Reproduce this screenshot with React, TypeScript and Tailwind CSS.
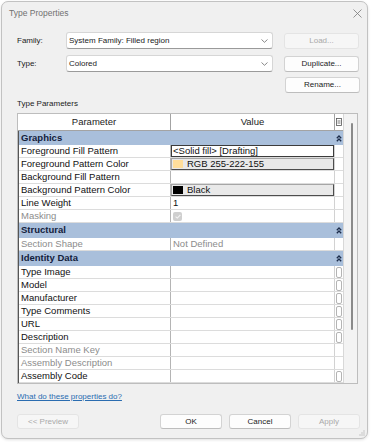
import React from "react";

type Row =
  | { kind: "band"; label: string; h: string }
  | {
      kind: "data";
      label: string;
      muted?: boolean;
      value?: "box" | "color" | "text" | "check" | "mutedText";
      text?: string;
      swatch?: string;
      btn?: boolean;
    };

const rows: Row[] = [
  { kind: "band", label: "Graphics", h: "h-[14px]" },
  { kind: "data", label: "Foreground Fill Pattern", value: "box", text: "<Solid fill> [Drafting]" },
  { kind: "data", label: "Foreground Pattern Color", value: "color", text: "RGB 255-222-155", swatch: "bg-[#ffde9b]" },
  { kind: "data", label: "Background Fill Pattern" },
  { kind: "data", label: "Background Pattern Color", value: "color", text: "Black", swatch: "bg-black" },
  { kind: "data", label: "Line Weight", value: "text", text: "1" },
  { kind: "data", label: "Masking", muted: true, value: "check" },
  { kind: "band", label: "Structural", h: "h-[15px]" },
  { kind: "data", label: "Section Shape", muted: true, value: "mutedText", text: "Not Defined" },
  { kind: "band", label: "Identity Data", h: "h-[15px]" },
  { kind: "data", label: "Type Image", btn: true },
  { kind: "data", label: "Model", btn: true },
  { kind: "data", label: "Manufacturer", btn: true },
  { kind: "data", label: "Type Comments", btn: true },
  { kind: "data", label: "URL", btn: true },
  { kind: "data", label: "Description", btn: true },
  { kind: "data", label: "Section Name Key", muted: true },
  { kind: "data", label: "Assembly Description", muted: true },
  { kind: "data", label: "Assembly Code", btn: true },
];

function Chevrons() {
  return (
    <svg width="6" height="7" viewBox="0 0 6 7" fill="none" stroke="#1c2c4a" strokeWidth="1.3">
      <path d="M0.8 3.2 L3 1 L5.2 3.2" />
      <path d="M0.8 6.2 L3 4 L5.2 6.2" />
    </svg>
  );
}

function Dropdown({ text }: { text: string }) {
  return (
    <div className="flex h-[17px] w-[207px] items-center justify-between rounded-[3px] border border-[#d6d6d6] border-b-[#9a9a9a] bg-white pl-[2px] pr-[4px]">
      <span className="text-[8px] text-[#1b1b1b]">{text}</span>
      <svg width="7" height="4" viewBox="0 0 7 4" fill="none" stroke="#6b6b6b" strokeWidth="0.8">
        <path d="M0.5 0.5 L3.5 3.3 L6.5 0.5" />
      </svg>
    </div>
  );
}

function Btn({ label, disabled, h = "h-[16px]" }: { label: string; disabled?: boolean; h?: string }) {
  return (
    <div
      className={
        disabled
          ? `flex ${h} w-full items-center justify-center rounded-[3px] border border-[#e4e4e4] bg-[#f6f6f6] text-[8px] text-[#a9a9a9]`
          : `flex ${h} w-full items-center justify-center rounded-[3px] border border-[#d3d3d3] border-b-[#bdbdbd] bg-[#fdfdfd] text-[8px] text-[#1b1b1b]`
      }
    >
      {label}
    </div>
  );
}

function ValueCell({ row }: { row: Extract<Row, { kind: "data" }> }) {
  if (row.value === "box")
    return (
      <div className="flex h-full w-full items-center border border-[#3c3c3c] bg-white pl-[1px] text-[9.5px] text-[#111]">
        {row.text}
      </div>
    );
  if (row.value === "color")
    return (
      <div className="flex h-full w-full items-center gap-[4px] border border-[#a6a6a6] border-b-[#4d4d4d] border-r-[#4d4d4d] bg-[#e9e9e9] pl-[1px] text-[9.5px] text-[#111]">
        <span className={`h-[8px] w-[10px] ${row.swatch}`} />
        {row.text}
      </div>
    );
  if (row.value === "text") return <span className="pl-[2px] text-[9.5px] text-[#111]">{row.text}</span>;
  if (row.value === "mutedText") return <span className="pl-[2px] text-[9.5px] text-[#8c8c8c]">{row.text}</span>;
  if (row.value === "check")
    return (
      <span className="ml-[2px] flex h-[9px] w-[9px] items-center justify-center rounded-[2px] bg-[#cfcfcf]">
        <svg width="6" height="5" viewBox="0 0 6 5" fill="none" stroke="#f4f4f4" strokeWidth="1.1">
          <path d="M0.6 2.6 L2.3 4.1 L5.4 0.8" />
        </svg>
      </span>
    );
  return null;
}

export default function App() {
  return (
    <div className="h-[442px] w-[371px] bg-white pl-[1px] pt-[1px] font-['Segoe_UI','Liberation_Sans',sans-serif]">
      <div className="relative flex h-[438px] w-[367px] flex-col rounded-[7px] border border-[#c2c2c2] bg-[#f0f0f0] shadow-[0_1px_3px_rgba(0,0,0,0.12)]">
        {/* title bar */}
        <div className="flex h-[22px] items-center justify-between pl-[7px] pr-[5px]">
          <span className="text-[8.5px] text-[#707070]">Type Properties</span>
          <svg width="9" height="9" viewBox="0 0 9 9" fill="none" stroke="#7a7a7a" strokeWidth="0.8">
            <path d="M0.5 0.5 L8.5 8.5 M8.5 0.5 L0.5 8.5" />
          </svg>
        </div>

        {/* family / type */}
        <div className="mt-[8px] flex items-center pl-[15px] pr-[7px]">
          <span className="w-[49px] text-[8px] text-[#1b1b1b]">Family:</span>
          <Dropdown text="System Family: Filled region" />
          <div className="ml-[11px] w-[75px]">
            <Btn label="Load..." disabled />
          </div>
        </div>
        <div className="mt-[6px] flex items-center pl-[15px] pr-[7px]">
          <span className="w-[49px] text-[8px] text-[#1b1b1b]">Type:</span>
          <Dropdown text="Colored" />
          <div className="ml-[11px] w-[75px]">
            <Btn label="Duplicate..." />
          </div>
        </div>
        <div className="mt-[5px] flex justify-end pr-[7px]">
          <div className="w-[75px]">
            <Btn label="Rename..." />
          </div>
        </div>

        <div className="mt-[6px] h-[10px] pl-[15px] text-[8px] leading-[10px] text-[#1b1b1b]">Type Parameters</div>

        {/* table box */}
        <div className="ml-[15px] mt-[4px] flex h-[271px] w-[341px] border border-[#bdbdbd] bg-[#f3f3f3]">
          <div className="flex w-[325px] flex-col bg-white">
            <div className="flex h-[17px] border-b border-[#a3a3a3] text-[9.5px] text-[#222]">
              <div className="flex w-[153px] items-center justify-center border-r border-[#a3a3a3]">Parameter</div>
              <div className="flex w-[164px] items-center justify-center border-r border-[#a3a3a3]">Value</div>
              <div className="flex w-[8px] items-center justify-center">
                <svg width="6" height="8" viewBox="0 0 6 8" fill="none" stroke="#555" strokeWidth="0.8">
                  <rect x="0.5" y="0.5" width="5" height="7" />
                  <path d="M1.5 3 H4.5 M1.5 5 H4.5" />
                </svg>
              </div>
            </div>
            <div className="flex flex-col border-l border-[#555]">
              {rows.map((row) =>
                row.kind === "band" ? (
                  <div
                    key={row.label}
                    className={`flex ${row.h} items-center justify-between bg-[#a9bfdb] pl-[2px] pr-[1px]`}
                  >
                    <span className="text-[9.5px] font-bold text-[#13213c]">{row.label}</span>
                    <Chevrons />
                  </div>
                ) : (
                  <div key={row.label} className="flex h-[13px] border-b border-[#dcdcdc]">
                    <div
                      className={`flex w-[152px] items-center border-r border-[#b4b4b4] pl-[2px] text-[9.5px] ${
                        row.muted ? "text-[#8c8c8c]" : "text-[#111]"
                      }`}
                    >
                      {row.label}
                    </div>
                    <div className="flex w-[164px] items-center border-r border-[#d2d2d2]">
                      <ValueCell row={row} />
                    </div>
                    <div className="flex w-[8px] items-center justify-center">
                      {row.btn && <span className="h-[11px] w-[6px] rounded-[2px] border border-[#b4b4b4] bg-white" />}
                    </div>
                  </div>
                )
              )}
            </div>
          </div>
          <div className="w-[15px] border-l border-[#d8d8d8] pl-[7px] pt-[9px]">
            <div className="h-[207px] w-[2px] rounded-full bg-[#8a8a8a]" />
          </div>
        </div>

        <div className="mt-[8px] h-[10px] pl-[15px] text-[8px] leading-[10px]">
          <span className="text-[#2a6cb0] underline">What do these properties do?</span>
        </div>

        {/* bottom buttons */}
        <div className="mt-[12px] flex pl-[15px] pr-[7px]">
          <div className="w-[62px]">
            <Btn label="<< Preview" disabled h="h-[15px]" />
          </div>
          <div className="ml-auto flex gap-[7px]">
            <div className="w-[62px]">
              <Btn label="OK" h="h-[15px]" />
            </div>
            <div className="w-[62px]">
              <Btn label="Cancel" h="h-[15px]" />
            </div>
            <div className="w-[62px]">
              <Btn label="Apply" disabled h="h-[15px]" />
            </div>
          </div>
        </div>

        {/* resize grip */}
        <svg className="absolute bottom-[2px] right-[2px]" width="6" height="6" viewBox="0 0 6 6" fill="#a0a0a0">
          <rect x="4.5" y="0.5" width="1" height="1" />
          <rect x="2.5" y="2.5" width="1" height="1" />
          <rect x="4.5" y="2.5" width="1" height="1" />
          <rect x="0.5" y="4.5" width="1" height="1" />
          <rect x="2.5" y="4.5" width="1" height="1" />
          <rect x="4.5" y="4.5" width="1" height="1" />
        </svg>
      </div>
    </div>
  );
}
